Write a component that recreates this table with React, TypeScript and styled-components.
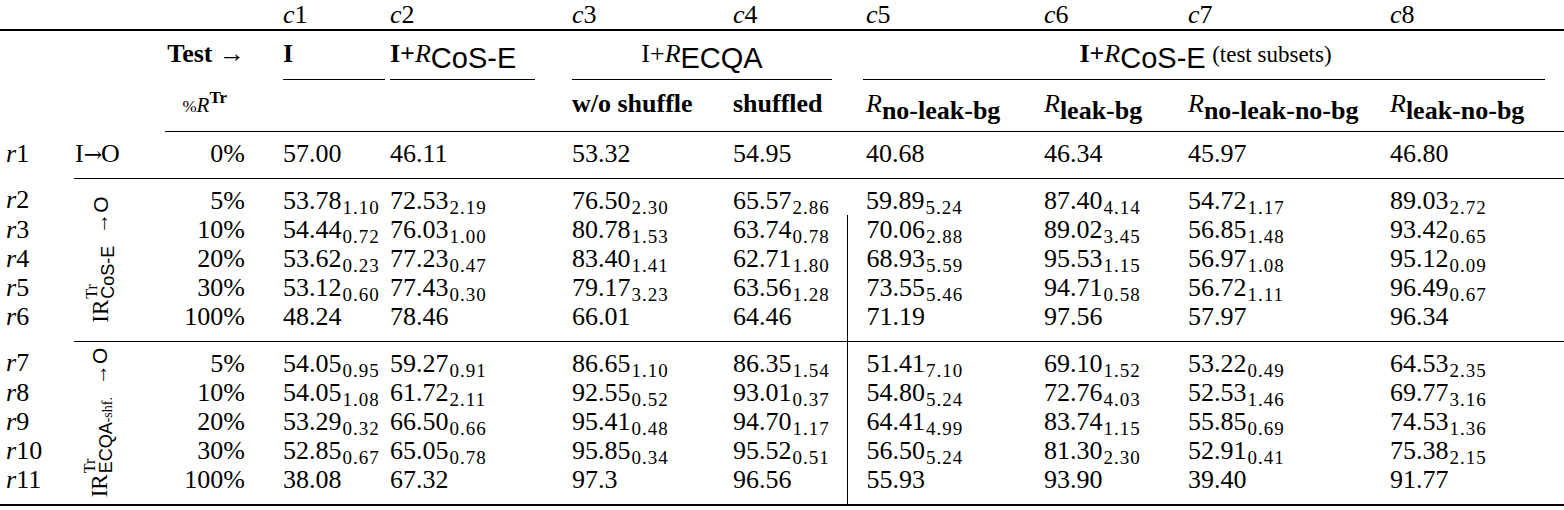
import React from 'react';
import styled, { createGlobalStyle } from 'styled-components';

const GlobalStyle = createGlobalStyle`
  body {
    margin: 0;
    background: #fff;
  }
`;

// column widths (px) and horizontal padding of each column
const COL_WIDTHS = [74, 91, 118, 107, 182, 161, 114, 197, 144, 202, 174];
const PAD_LEFT = [6, 1, 0, 0, 0, 0, 0, 19, 0, 0, 0];
const PAD_RIGHT = [0, 0, 38, 0, 0, 0, 0, 0, 0, 0, 0];

type Rule = 'thin' | 'thick';

const Table = styled.table`
  width: 1564px;
  table-layout: fixed;
  border-collapse: collapse;
  border-spacing: 0;
  font-family: 'Liberation Serif', 'Times New Roman', serif;
  font-size: 26px;
  line-height: 29px;
  color: #000;
`;

const Row = styled.tr<{ $pt?: number; $pb?: number }>`
  & > td {
    padding-top: ${(p) => p.$pt ?? 0}px;
    padding-bottom: ${(p) => p.$pb ?? 0}px;
  }
`;

const Cell = styled.td<{
  $col: number;
  $align?: 'left' | 'right' | 'center';
  $pl?: number;
  $pr?: number;
  $bt?: Rule;
  $bb?: Rule;
  $bl?: boolean;
}>`
  padding-left: ${(p) => p.$pl ?? PAD_LEFT[p.$col]}px;
  padding-right: ${(p) => p.$pr ?? PAD_RIGHT[p.$col]}px;
  text-align: ${(p) => p.$align ?? (p.$col === 2 ? 'right' : 'left')};
  white-space: nowrap;
  vertical-align: middle;
  border-top: ${(p) => (p.$bt ? `${p.$bt === 'thick' ? 2.5 : 1}px solid #000` : 'none')};
  border-bottom: ${(p) => (p.$bb ? `${p.$bb === 'thick' ? 2.5 : 1}px solid #000` : 'none')};
  border-left: ${(p) => (p.$bl ? '1px solid #000' : 'none')};
`;

const RuleRow = styled.tr`
  & > td {
    padding: 0;
    height: 1px;
    line-height: 0;
    font-size: 0;
  }
`;

const Trim = styled.div<{ $ml?: number; $mr?: number }>`
  height: 1px;
  background: #000;
  margin-left: ${(p) => p.$ml ?? 0}px;
  margin-right: ${(p) => p.$mr ?? 0}px;
`;

const Ital = styled.i`
  font-style: italic;
`;

const Strong = styled.b`
  font-weight: bold;
`;

const Sub = styled.span<{ $sans?: boolean; $bold?: boolean; $size: number; $drop: number }>`
  font-family: ${(p) =>
    p.$sans ? "'Liberation Sans', Arial, sans-serif" : "'Liberation Serif', 'Times New Roman', serif"};
  font-weight: ${(p) => (p.$bold ? 'bold' : 'normal')};
  font-size: ${(p) => p.$size}px;
  vertical-align: -${(p) => p.$drop}px;
  line-height: 0;
`;

const ValueSub = styled.span`
  font-size: 19px;
  letter-spacing: 1px;
  vertical-align: -5px;
  line-height: 0;
  margin-left: 1px;
`;

const Small = styled.span<{ $size: number }>`
  font-size: ${(p) => p.$size}px;
  line-height: 0;
`;

const Sup = styled.span<{ $size: number; $rise: number; $bold?: boolean }>`
  font-size: ${(p) => p.$size}px;
  font-weight: ${(p) => (p.$bold ? 'bold' : 'normal')};
  vertical-align: ${(p) => p.$rise}px;
  line-height: 0;
`;

const Arrow = styled.span`
  font-family: 'DejaVu Serif', serif;
  font-size: 22px;
  letter-spacing: -1px;
`;

const LabelCell = styled.td`
  && {
    padding: 0 0 0 6px;
  }
  vertical-align: middle;
`;

const LabelCellTop = styled(LabelCell)`
  border-top: 1px solid #000;
  border-bottom: 2.5px solid #000;
`;

const LabelBox = styled.div`
  width: 40px;
  height: 150px;
  display: flex;
  align-items: center;
  justify-content: center;
`;

const Rotated = styled.span`
  flex-shrink: 0;
  display: inline-flex;
  align-items: center;
  transform: rotate(-90deg);
  white-space: nowrap;
  font-size: 23px;
  line-height: 1;
`;

const Stack = styled.span`
  display: inline-flex;
  flex-direction: column;
  align-items: flex-start;
  margin-left: 1px;
`;

const StackSup = styled.span`
  font-size: 16px;
  line-height: 15px;
`;

const StackSub = styled.span`
  font-family: 'Liberation Sans', Arial, sans-serif;
  font-size: 18px;
  line-height: 18px;
`;

const StackSubSerif = styled.span`
  font-family: 'Liberation Serif', 'Times New Roman', serif;
  font-size: 14px;
`;

const ArrowO = styled.span`
  margin-left: 12px;
  font-size: 21px;
`;

const SansO = styled.span`
  font-family: 'Liberation Sans', Arial, sans-serif;
`;

function Value({ v }: { v: string }) {
  const [main, sd] = v.split('|');
  return (
    <>
      {main}
      {sd && <ValueSub>{sd}</ValueSub>}
    </>
  );
}

function IR({ sub }: { sub: React.ReactNode }) {
  return (
    <Rotated>
      IR
      <Stack>
        <StackSup>Tr</StackSup>
        <StackSub>{sub}</StackSub>
      </Stack>
      <ArrowO>
        →<SansO>O</SansO>
      </ArrowO>
    </Rotated>
  );
}

function RSub({ text }: { text: string }) {
  return (
    <>
      <Ital>R</Ital>
      <Sub $bold $size={26} $drop={7}>
        {text}
      </Sub>
    </>
  );
}

function IplusR({ sub, bold = true }: { sub: string; bold?: boolean }) {
  return (
    <>
      {bold ? <Strong>I+</Strong> : 'I+'}
      <Ital>R</Ital>
      <Sub $sans $size={29} $drop={6}>
        {sub}
      </Sub>
    </>
  );
}

type DataRow = [string, string, string[]];

const GROUP1: DataRow[] = [
  ['2', '5%', ['53.78|1.10', '72.53|2.19', '76.50|2.30', '65.57|2.86', '59.89|5.24', '87.40|4.14', '54.72|1.17', '89.03|2.72']],
  ['3', '10%', ['54.44|0.72', '76.03|1.00', '80.78|1.53', '63.74|0.78', '70.06|2.88', '89.02|3.45', '56.85|1.48', '93.42|0.65']],
  ['4', '20%', ['53.62|0.23', '77.23|0.47', '83.40|1.41', '62.71|1.80', '68.93|5.59', '95.53|1.15', '56.97|1.08', '95.12|0.09']],
  ['5', '30%', ['53.12|0.60', '77.43|0.30', '79.17|3.23', '63.56|1.28', '73.55|5.46', '94.71|0.58', '56.72|1.11', '96.49|0.67']],
  ['6', '100%', ['48.24', '78.46', '66.01', '64.46', '71.19', '97.56', '57.97', '96.34']],
];

const GROUP2: DataRow[] = [
  ['7', '5%', ['54.05|0.95', '59.27|0.91', '86.65|1.10', '86.35|1.54', '51.41|7.10', '69.10|1.52', '53.22|0.49', '64.53|2.35']],
  ['8', '10%', ['54.05|1.08', '61.72|2.11', '92.55|0.52', '93.01|0.37', '54.80|5.24', '72.76|4.03', '52.53|1.46', '69.77|3.16']],
  ['9', '20%', ['53.29|0.32', '66.50|0.66', '95.41|0.48', '94.70|1.17', '64.41|4.99', '83.74|1.15', '55.85|0.69', '74.53|1.36']],
  ['10', '30%', ['52.85|0.67', '65.05|0.78', '95.85|0.34', '95.52|0.51', '56.50|5.24', '81.30|2.30', '52.91|0.41', '75.38|2.15']],
  ['11', '100%', ['38.08', '67.32', '97.3', '96.56', '55.93', '93.90', '39.40', '91.77']],
];

const R1 = ['57.00', '46.11', '53.32', '54.95', '40.68', '46.34', '45.97', '46.80'];

function GroupRows({ rows, label, second }: { rows: DataRow[]; label: React.ReactNode; second?: boolean }) {
  return (
    <>
      {rows.map(([n, pct, vals], i) => {
        const first = i === 0;
        const last = i === rows.length - 1;
        const bt: Rule | undefined = second && first ? 'thin' : undefined;
        const bb: Rule | undefined = second && last ? 'thick' : undefined;
        const vline = second || i > 0;
        return (
          <Row key={n} $pt={first ? 7 : 0} $pb={last ? 10 : 0}>
            <Cell $col={0} $bb={bb}>
              <Ital>r</Ital>
              {n}
            </Cell>
            {first &&
              (second ? (
                <LabelCellTop rowSpan={rows.length}>
                  <LabelBox>{label}</LabelBox>
                </LabelCellTop>
              ) : (
                <LabelCell rowSpan={rows.length}>
                  <LabelBox>{label}</LabelBox>
                </LabelCell>
              ))}
            <Cell $col={2} $bt={bt} $bb={bb}>
              {pct}
            </Cell>
            {vals.map((v, j) => (
              <Cell key={j} $col={3 + j} $bt={bt} $bb={bb} $bl={j === 4 && vline}>
                <Value v={v} />
              </Cell>
            ))}
          </Row>
        );
      })}
    </>
  );
}

export default function App() {
  return (
    <>
      <GlobalStyle />
      <Table>
        <colgroup>
          {COL_WIDTHS.map((w, i) => (
            <col key={i} style={{ width: w }} />
          ))}
        </colgroup>
        <tbody>
          <Row>
            {COL_WIDTHS.map((_, i) => (
              <Cell key={i} $col={i} $bb="thick">
                {i >= 3 && (
                  <>
                    <Ital>c</Ital>
                    {i - 2}
                  </>
                )}
              </Cell>
            ))}
          </Row>

          <Row $pt={8} $pb={11}>
            <Cell $col={0} />
            <Cell $col={1} />
            <Cell $col={2}>
              <Strong>Test</Strong> →
            </Cell>
            <Cell $col={3}>
              <Strong>I</Strong>
            </Cell>
            <Cell $col={4}>
              <IplusR sub="CoS-E" />
            </Cell>
            <Cell $col={5} colSpan={2} $align="center" $pr={15}>
              <IplusR sub="ECQA" bold={false} />
            </Cell>
            <Cell $col={7} colSpan={4} $align="center" $pr={19}>
              <IplusR sub="CoS-E" /> <Small $size={23}>(test subsets)</Small>
            </Cell>
          </Row>

          <RuleRow>
            <td colSpan={3} />
            <td>
              <Trim $mr={5} />
            </td>
            <td>
              <Trim $mr={37} />
            </td>
            <td colSpan={2}>
              <Trim $mr={15} />
            </td>
            <td colSpan={4}>
              <Trim $ml={16} $mr={19} />
            </td>
          </RuleRow>

          <Row $pt={9} $pb={13}>
            <Cell $col={0} />
            <Cell $col={1} />
            <Cell $col={2} $bb="thin" $pr={56}>
              <Small $size={17}>%</Small>
              <Small $size={21}>
                <Ital>R</Ital>
              </Small>
              <Sup $size={17} $rise={9} $bold>
                Tr
              </Sup>
            </Cell>
            <Cell $col={3} $bb="thin" />
            <Cell $col={4} $bb="thin" />
            <Cell $col={5} $bb="thin">
              <Strong>w/o shuffle</Strong>
            </Cell>
            <Cell $col={6} $bb="thin">
              <Strong>shuffled</Strong>
            </Cell>
            <Cell $col={7} $bb="thin">
              <RSub text="no-leak-bg" />
            </Cell>
            <Cell $col={8} $bb="thin">
              <RSub text="leak-bg" />
            </Cell>
            <Cell $col={9} $bb="thin">
              <RSub text="no-leak-no-bg" />
            </Cell>
            <Cell $col={10} $bb="thin">
              <RSub text="leak-no-bg" />
            </Cell>
          </Row>

          <Row $pt={7} $pb={9}>
            <Cell $col={0}>
              <Ital>r</Ital>1
            </Cell>
            <Cell $col={1} $bb="thin">
              I<Arrow>→</Arrow>O
            </Cell>
            <Cell $col={2} $bb="thin">
              0%
            </Cell>
            {R1.map((v, j) => (
              <Cell key={j} $col={3 + j} $bb="thin">
                {v}
              </Cell>
            ))}
          </Row>

          <GroupRows rows={GROUP1} label={<IR sub="CoS-E" />} />
          <GroupRows
            rows={GROUP2}
            second
            label={
              <IR
                sub={
                  <>
                    ECQA<StackSubSerif>-shf.</StackSubSerif>
                  </>
                }
              />
            }
          />
        </tbody>
      </Table>
    </>
  );
}
